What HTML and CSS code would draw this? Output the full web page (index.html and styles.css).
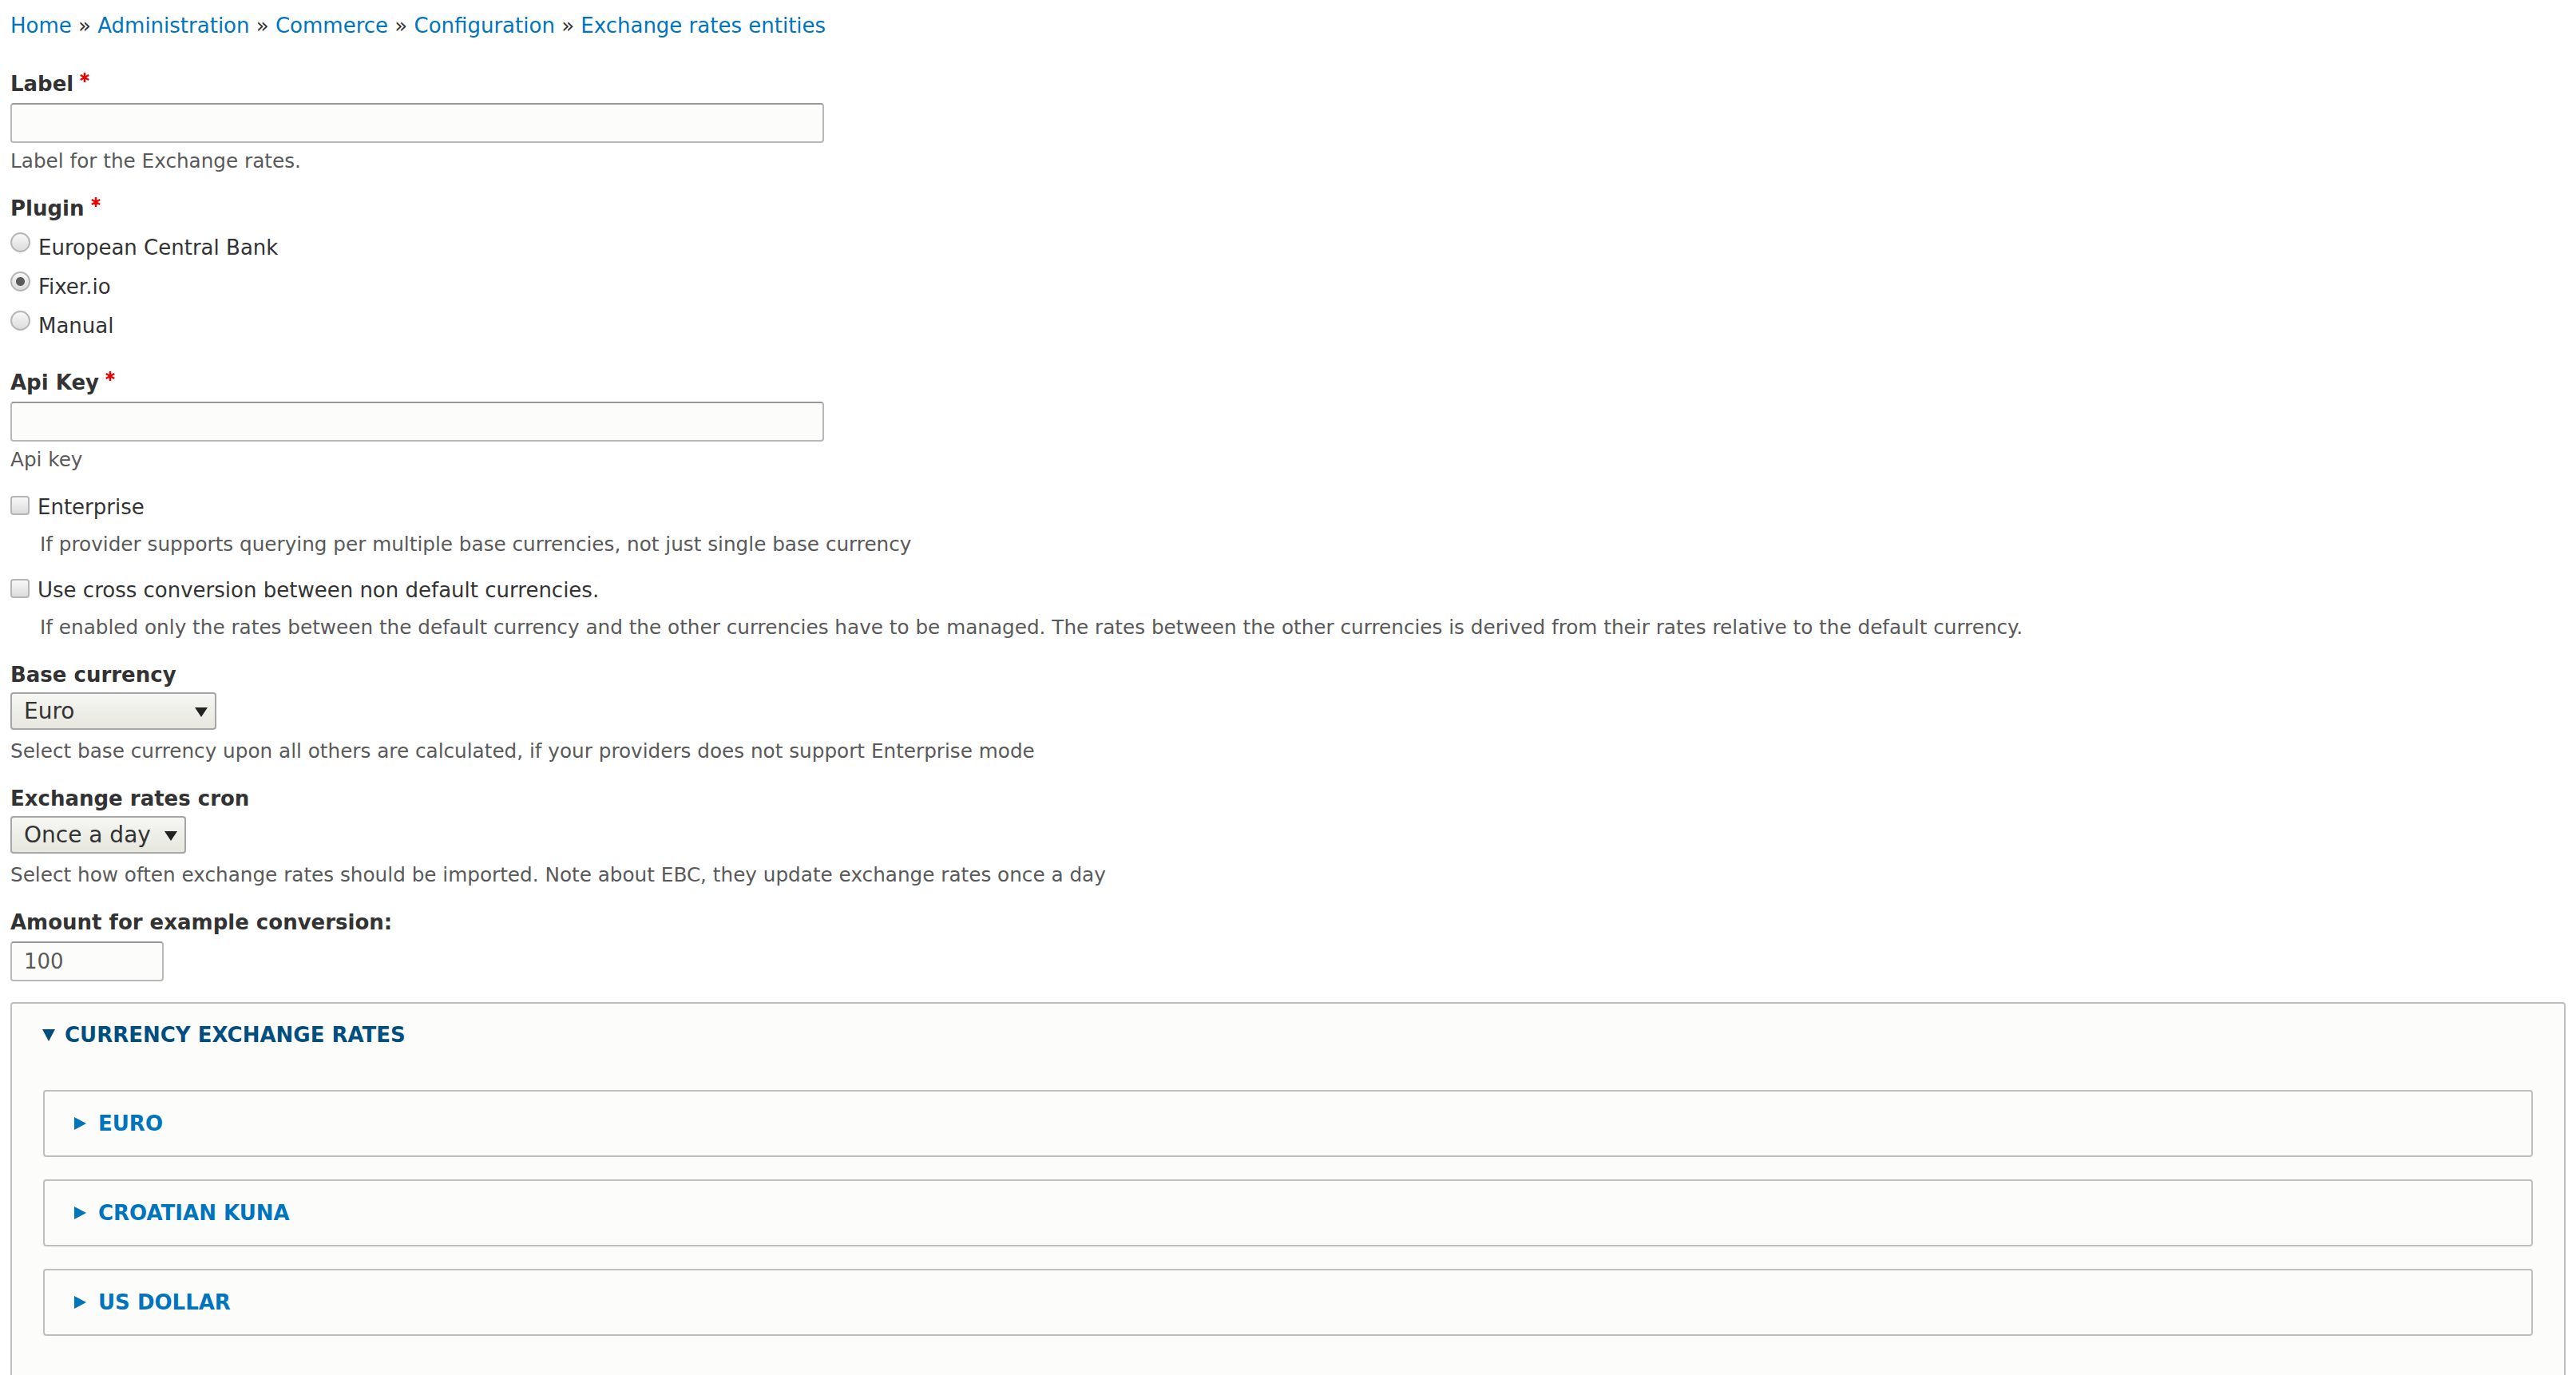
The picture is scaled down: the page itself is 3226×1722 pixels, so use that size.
FILE: index.html
```html
<!DOCTYPE html>
<html>
<head>
  <meta charset="UTF-8">
  <meta name="viewport" content="width=device-width, initial-scale=1">
  <title>Exchange rates</title>

  <link rel="stylesheet" href="styles.css">
</head>

<body>

<main class="page">

  <nav class="breadcrumb">
    <a href="#">Home</a> <span class="breadcrumb__sep">»</span>
    <a href="#">Administration</a> <span class="breadcrumb__sep">»</span>
    <a href="#">Commerce</a> <span class="breadcrumb__sep">»</span>
    <a href="#">Configuration</a> <span class="breadcrumb__sep">»</span>
    <a href="#">Exchange rates entities</a>
  </nav>

  <form class="form">

    <div class="form-item">
      <label class="form-item__label" for="edit-label">Label<svg class="required" viewBox="0 0 14 14"><path d="M7 1v12M1.8 4l10.4 6M1.8 10l10.4-6"/></svg></label>
      <input class="form-text" id="edit-label" type="text">
      <div class="description">Label for the Exchange rates.</div>
    </div>

    <div class="form-item form-item--radios">
      <span class="form-item__label">Plugin<svg class="required" viewBox="0 0 14 14"><path d="M7 1v12M1.8 4l10.4 6M1.8 10l10.4-6"/></svg></span>
      <div class="form-radios">
        <label class="option"><input type="radio" name="plugin" class="form-radio">European Central Bank</label>
        <label class="option"><input type="radio" name="plugin" class="form-radio" checked>Fixer.io</label>
        <label class="option"><input type="radio" name="plugin" class="form-radio">Manual</label>
      </div>
    </div>

    <div class="form-item">
      <label class="form-item__label" for="edit-api-key">Api Key<svg class="required" viewBox="0 0 14 14"><path d="M7 1v12M1.8 4l10.4 6M1.8 10l10.4-6"/></svg></label>
      <input class="form-text" id="edit-api-key" type="text">
      <div class="description">Api key</div>
    </div>

    <div class="form-item form-item--checkbox">
      <label class="option"><input type="checkbox" class="form-checkbox">Enterprise</label>
      <div class="description description--option">If provider supports querying per multiple base currencies, not just single base currency</div>
    </div>

    <div class="form-item form-item--checkbox form-item--tight">
      <label class="option"><input type="checkbox" class="form-checkbox">Use cross conversion between non default currencies.</label>
      <div class="description description--option">If enabled only the rates between the default currency and the other currencies have to be managed. The rates between the other currencies is derived from their rates relative to the default currency.</div>
    </div>

    <div class="form-item">
      <label class="form-item__label" for="edit-base">Base currency</label>
      <span class="select-wrap">
        <select class="form-select form-select--base" id="edit-base">
          <option>Euro</option>
          <option>Croatian Kuna</option>
          <option>US Dollar</option>
        </select>
      </span>
      <div class="description">Select base currency upon all others are calculated, if your providers does not support Enterprise mode</div>
    </div>

    <div class="form-item">
      <label class="form-item__label" for="edit-cron">Exchange rates cron</label>
      <span class="select-wrap">
        <select class="form-select form-select--cron" id="edit-cron">
          <option>Once a day</option>
          <option>Once an hour</option>
        </select>
      </span>
      <div class="description">Select how often exchange rates should be imported. Note about EBC, they update exchange rates once a day</div>
    </div>

    <div class="form-item">
      <label class="form-item__label" for="edit-amount">Amount for example conversion:</label>
      <input class="form-text form-text--small" id="edit-amount" type="text" value="100">
    </div>

    <details class="details" open>
      <summary class="details__summary"><span class="arrow arrow--down"></span>Currency exchange rates</summary>
      <div class="details__wrapper">
        <details class="details details--inner">
          <summary class="details__summary"><span class="arrow arrow--right"></span>Euro</summary>
        </details>
        <details class="details details--inner">
          <summary class="details__summary"><span class="arrow arrow--right"></span>Croatian Kuna</summary>
        </details>
        <details class="details details--inner">
          <summary class="details__summary"><span class="arrow arrow--right"></span>US Dollar</summary>
        </details>
      </div>
    </details>

  </form>

</main>

</body>
</html>
```

FILE: styles.css
```css
html,
body {
  margin: 0;
  -webkit-font-smoothing: antialiased;
}

body {
  font-family: "DejaVu Sans", Verdana, sans-serif;
  font-size: 26px;
  line-height: 40px;
  color: #333;
  background: #fff;
}

a {
  color: #0074bd;
  text-decoration: none;
}

.page { padding: 12px 13px 0; }

.breadcrumb__sep { color: #333; }


/* Form items */

.form {
  display: flex;
  flex-direction: column;
  gap: 21px;
  margin-top: 33px;
}

.form-item__label {
  display: block;
  font-weight: bold;
}

.required {
  display: inline-block;
  vertical-align: top;
  width: 14px;
  height: 14px;
  margin: 5px 0 0 7px;
  fill: none;
  stroke: #e00;
  stroke-width: 2.4;
}

.description {
  margin-top: 5px;
  font-size: 24.7px;
  line-height: 36px;
  color: #595959;
}

.description--option {
  margin-top: 9px;
  padding-left: 37px;
}

.select-wrap + .description { margin-top: 9px; }

.form-text {
  display: block;
  box-sizing: border-box;
  width: 1019px;
  height: 50px;
  margin: 4px 0 0;
  padding: 0 15px;
  font: inherit;
  color: #595959;
  background: #fcfcfa;
  border: 2px solid #b8b8b8;
  border-top-color: #999;
  border-radius: 4px;
}

.form-text--small { width: 192px; }


/* Radios and checkboxes */

.form-item--radios { margin-bottom: 10px; }

.form-radios {
  display: flex;
  flex-direction: column;
  gap: 9px;
  padding-top: 9px;
}

.form-item--tight { margin-top: -2px; }

.option {
  display: flex;
  align-items: flex-start;
}

.form-radio,
.form-checkbox {
  -webkit-appearance: none;
  appearance: none;
  box-sizing: border-box;
  flex: none;
  margin: 0 10px 0 0;
  background: linear-gradient(#f8f8f8, #dcdcdc);
  border: 2px solid #b5b5b5;
}

.form-radio {
  width: 25px;
  height: 25px;
  margin-top: 1px;
  border-radius: 50%;
}

.form-radio:checked {
  background: radial-gradient(circle, #5a5a5a 0 5px, transparent 6px),
    linear-gradient(#f8f8f8, #dcdcdc);
}

.form-checkbox {
  width: 24px;
  height: 24px;
  margin-top: 6px;
  border-radius: 4px;
}


/* Selects */

.select-wrap {
  position: relative;
  display: block;
  width: max-content;
  margin-top: 2px;
}

.select-wrap::after {
  content: "";
  position: absolute;
  top: 50%;
  right: 11px;
  margin-top: -5px;
  border-top: 12px solid #222;
  border-left: 8px solid transparent;
  border-right: 8px solid transparent;
  pointer-events: none;
}

.form-select {
  -webkit-appearance: none;
  appearance: none;
  display: block;
  box-sizing: border-box;
  height: 47px;
  margin: 0;
  padding: 0 40px 0 15px;
  font: inherit;
  font-size: 28px;
  color: #333;
  background: linear-gradient(#f6f6f3, #e7e7df);
  border: 2px solid #a6a6a6;
  border-radius: 4px;
}

.form-select--base { width: 258px; }
.form-select--cron { width: 220px; }


/* Details */

.details {
  margin-top: 5px;
  background: #fcfcfa;
  border: 2px solid #bfbfbf;
  border-radius: 4px;
}

.details__summary {
  display: flex;
  align-items: center;
  gap: 12px;
  padding: 19px 38px;
  font-weight: bold;
  text-transform: uppercase;
  color: #004f80;
  list-style: none;
  cursor: pointer;
}

.details__summary::-webkit-details-marker { display: none; }

.details__wrapper {
  display: flex;
  flex-direction: column;
  gap: 28px;
  padding: 30px 39px 60px;
}

.details--inner { margin-top: 0; }

.details--inner .details__summary {
  gap: 15px;
  padding: 20px 37px;
  color: #0074bd;
}

.arrow {
  display: block;
  width: 0;
  height: 0;
}

.arrow--down {
  border-top: 15px solid #004f80;
  border-left: 8.5px solid transparent;
  border-right: 8.5px solid transparent;
}

.arrow--right {
  border-left: 15px solid #0074bd;
  border-top: 8.5px solid transparent;
  border-bottom: 8.5px solid transparent;
}
```
